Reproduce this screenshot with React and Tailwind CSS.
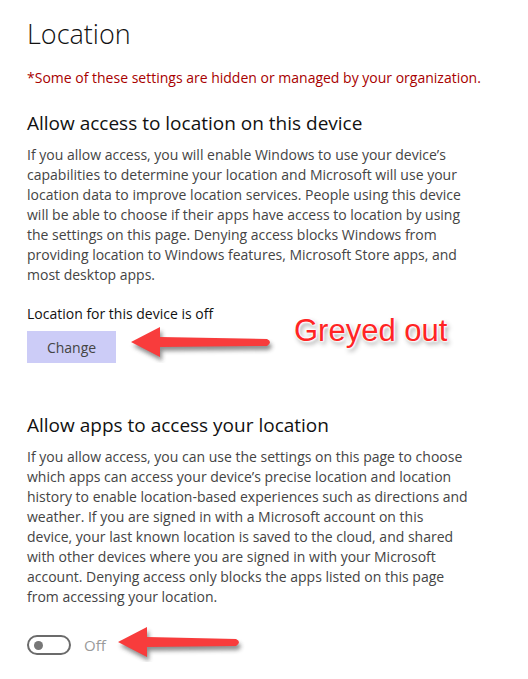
import React from "react";

const body1 = [
  "If you allow access, you will enable Windows to use your device\u2019s",
  "capabilities to determine your location and Microsoft will use your",
  "location data to improve location services. People using this device",
  "will be able to choose if their apps have access to location by using",
  "the settings on this page. Denying access blocks Windows from",
  "providing location to Windows features, Microsoft Store apps, and",
  "most desktop apps.",
];

const body2 = [
  "If you allow access, you can use the settings on this page to choose",
  "which apps can access your device\u2019s precise location and location",
  "history to enable location-based experiences such as directions and",
  "weather. If you are signed in with a Microsoft account on this",
  "device, your last known location is saved to the cloud, and shared",
  "with other devices where you are signed in with your Microsoft",
  "account. Denying access only blocks the apps listed on this page",
  "from accessing your location.",
];

function Arrow({ className, width, height }) {
  const c = height / 2;
  const d = `M2 ${c - 2} L31 ${c - 17} L31 ${c - 7} L${width - 10} ${c - 5} Q${width - 4} ${c - 2} ${width - 10} ${c + 2} L31 ${c + 3} L31 ${c + 13} Z`;
  return (
    <svg className={className} width={width} height={height} viewBox={`0 0 ${width} ${height}`}>
      <defs>
        <filter id={"sh" + width} x="-20%" y="-50%" width="140%" height="200%">
          <feGaussianBlur stdDeviation="2" />
        </filter>
      </defs>
      <g transform="translate(2,4)" opacity="0.55" filter={`url(#sh${width})`}>
        <path d={d} fill="#333" />
      </g>
      <path d={d} fill="#f83c3c" />
    </svg>
  );
}

function Body({ lines }) {
  return (
    <div className="flex flex-col text-[14px] leading-[20px] text-[#444]">
      {lines.map((l) => (
        <span key={l} className="whitespace-nowrap">{l}</span>
      ))}
    </div>
  );
}

export default function App() {
  return (
    <div className="relative flex h-[679px] w-[528px] flex-col overflow-hidden bg-white pl-[27px] pt-[16px] font-['Open_Sans',sans-serif]">
      <h1 className="text-[27px] leading-[36px] font-light text-[#111]">Location</h1>
      <p className="mt-[16px] text-[14px] leading-[20px] text-[#a80000]">
        *Some of these settings are hidden or managed by your organization.
      </p>

      <section className="mt-[21px] flex flex-col gap-[8px]">
        <h2 className="text-[19px] leading-[28px] text-[#111]">Allow access to location on this device</h2>
        <Body lines={body1} />
      </section>

      <section className="mt-[19px] flex flex-col items-start gap-[7px]">
        <p className="text-[14px] leading-[20px] text-[#111]">Location for this device is off</p>
        <div className="flex h-[32px] w-[89px] items-center justify-center bg-[#ccccf7] text-[14px] text-[#444]">
          Change
        </div>
      </section>

      <section className="mt-[48px] flex flex-col gap-[8px]">
        <h2 className="text-[19px] leading-[28px] text-[#111]">Allow apps to access your location</h2>
        <Body lines={body2} />
      </section>

      <div className="mt-[28px] flex items-center gap-[13px]">
        <div className="flex h-[20px] w-[44px] items-center rounded-full border-2 border-[#6b6b6b] pl-[5px]">
          <div className="h-[9px] w-[9px] rounded-full bg-[#777]" />
        </div>
        <span className="text-[15px] leading-[20px] text-[#9a9a9a]">Off</span>
      </div>

      <Arrow className="absolute left-[129px] top-[325px]" width={148} height={38} />
      <Arrow className="absolute left-[116px] top-[626px]" width={130} height={36} />
      <span className="absolute left-[294px] top-[313px] font-['Liberation_Sans',sans-serif] text-[31px] leading-[36px] text-[#ff2424] [text-shadow:0_0_2px_#fff,0_0_2px_#fff,1px_1px_2px_#fff,-1px_-1px_2px_#fff,2px_3px_5px_rgba(0,0,0,0.45)]">
        Greyed out
      </span>
    </div>
  );
}
